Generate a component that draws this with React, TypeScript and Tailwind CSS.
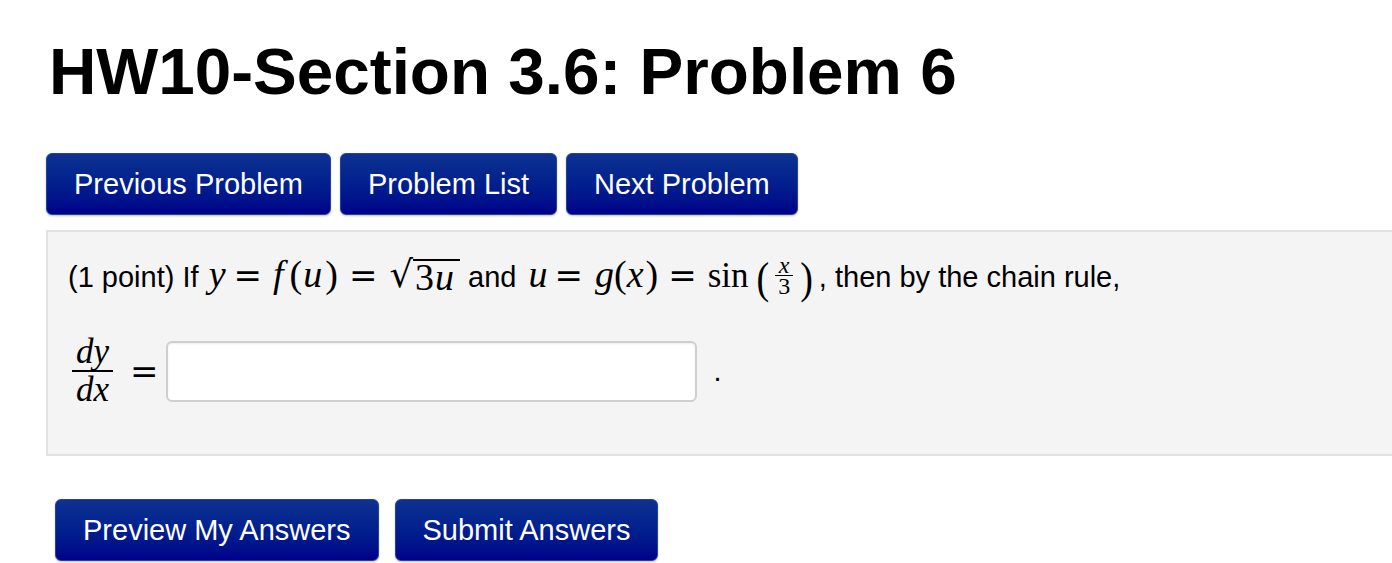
import React from "react";

const serif = { fontFamily: '"Liberation Serif", "DejaVu Serif", serif' };
const dv = { fontFamily: '"DejaVu Serif", serif' };

function I({ children, className = "" }: { children: React.ReactNode; className?: string }) {
  return <span className={"italic " + className}>{children}</span>;
}

function Eq({ className = "mx-[8px]" }: { className?: string }) {
  return (
    <span className={"not-italic text-[34px] " + className} style={dv}>
      =
    </span>
  );
}

function Btn({ children }: { children: React.ReactNode }) {
  return (
    <button className="h-[62px] px-[27px] rounded-[6px] border border-[#24449a] bg-gradient-to-b from-[#0e3191] to-[#00008a] text-white text-[29px] leading-none flex items-center shadow-[0_1px_2px_rgba(0,0,0,0.25)]">
      {children}
    </button>
  );
}

export default function App() {
  return (
    <div
      className="min-h-[563px] w-[1392px] overflow-hidden bg-white pl-[46px] pt-[32px] text-black"
      style={{ fontFamily: '"Liberation Sans", Arial, sans-serif' }}
    >
      <h1 className="text-[65.6px] font-bold leading-[80px] pl-[3px]">HW10-Section 3.6: Problem 6</h1>

      <div className="mt-[41px] flex gap-[9px]">
        <Btn>Previous Problem</Btn>
        <Btn>Problem List</Btn>
        <Btn>Next Problem</Btn>
      </div>

      <div className="mt-[15px] border-2 border-r-0 border-[#e2e2e2] bg-[#f4f4f4] pl-[20px] pt-[23px] pb-[47px] text-[29px]">
        <div className="leading-[40px] h-[40px] whitespace-nowrap">
          (1 point) If{" "}
          <span className="text-[38px] leading-none" style={serif}>
            <I className="ml-[2px]">y</I>
            <Eq className="ml-[8px] mr-[11px]" />
            <I>f</I>
            <span className="ml-[6px]">(</span>
            <I className="ml-[1px]">u</I>
            <span className="ml-[3px]">)</span>
            <Eq className="ml-[11px] mr-[12px]" />
            <span className="inline-flex items-start">
              <span className="text-[37px]" style={dv}>
                √
              </span>
              <span className="border-t-[2px] border-black mt-[3px] leading-[32px] pl-[2px] pr-[6px]">
                3<I className="ml-[1px]">u</I>
              </span>
            </span>
          </span>{" "}
          and{" "}
          <span className="text-[38px] leading-none" style={serif}>
            <I className="ml-[4px]">u</I>
            <Eq className="ml-[7px] mr-[12px]" />
            <I>g</I>
            <span>(</span>
            <I>x</I>
            <span className="ml-[2px]">)</span>
            <Eq className="ml-[10px] mr-[11px]" />
            <span className="text-[35px]">sin</span>
            <span className="ml-[8px] inline-block scale-y-[1.15] translate-y-[4px]">(</span>
            <span className="inline-flex flex-col items-center align-middle text-[24px] leading-[20px] mx-[6px] -translate-y-[3px]">
              <span className="italic">x</span>
              <span className="border-t-[1.5px] border-black w-[18px]"></span>
              <span>3</span>
            </span>
            <span className="ml-[1px] inline-block scale-y-[1.15] translate-y-[4px]">)</span>
          </span>
          <span className="ml-[6px]">, then by the chain rule,</span>
        </div>

        <div className="mt-[40px] h-[72px] flex items-center">
          <span className="ml-[4px] inline-flex flex-col items-center text-[35px] leading-[34px]" style={serif}>
            <span className="italic">dy</span>
            <span className="border-t-2 border-black w-[41px] my-[1px]"></span>
            <span className="italic">dx</span>
          </span>
          <span className="ml-[17px] text-[34px]" style={dv}>
            =
          </span>
          <div className="ml-[7px] w-[531px] h-[61px] rounded-[6px] border-2 border-[#cfcfcf] bg-white shadow-[inset_0_1px_2px_rgba(0,0,0,0.08)]"></div>
          <span className="ml-[17px] text-[29px] leading-none">.</span>
        </div>
      </div>

      <div className="mt-[43px] ml-[9px] flex gap-[16px]">
        <Btn>Preview My Answers</Btn>
        <Btn>Submit Answers</Btn>
      </div>
    </div>
  );
}
